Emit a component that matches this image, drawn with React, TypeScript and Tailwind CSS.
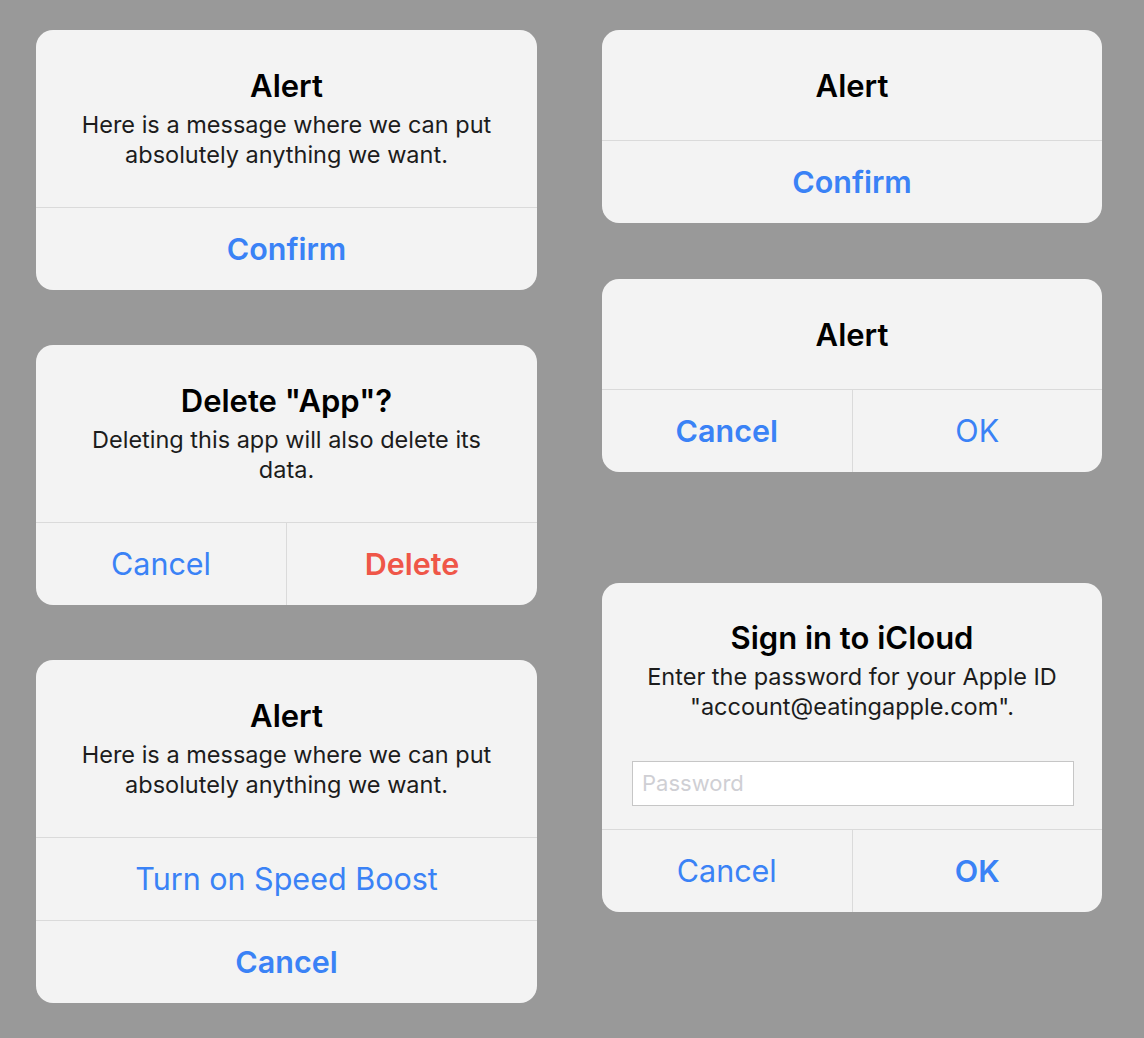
import React from "react";

const FONT = { fontFamily: 'Inter, "Liberation Sans", Arial, sans-serif' };

function Title({ children }: { children: React.ReactNode }) {
  return (
    <div className="text-[31px] leading-[38px] font-semibold text-black">
      {children}
    </div>
  );
}

function Message({ children }: { children: React.ReactNode }) {
  return (
    <div className="mt-[5px] text-[23.5px] leading-[30px] text-[#1c1c1c] px-4">
      {children}
    </div>
  );
}

function Btn({
  children,
  bold,
  red,
  left,
}: {
  children: React.ReactNode;
  bold?: boolean;
  red?: boolean;
  left?: boolean;
}) {
  return (
    <div
      className={
        "flex-1 h-[82px] flex items-center justify-center text-[30.5px] " +
        (bold ? "font-semibold " : "font-normal ") +
        (red ? "text-[#ef5648] " : "text-[#3a82f6] ") +
        (left ? "border-l border-[#dadada]" : "")
      }
    >
      {children}
    </div>
  );
}

function Card({ children, className = "" }: { children: React.ReactNode; className?: string }) {
  return (
    <div className={"bg-[#f3f3f3] rounded-[17px] overflow-hidden text-center " + className}>
      {children}
    </div>
  );
}

function Row({ children }: { children: React.ReactNode }) {
  return <div className="flex border-t border-[#dadada]">{children}</div>;
}

export default function App() {
  return (
    <div className="w-[1144px] h-[1038px] bg-[#999999] flex gap-[65px] pl-[36px] pt-[30px]" style={FONT}>
      <div className="w-[501px] flex flex-col">
        <Card>
          <div className="pt-[37px] pb-[37px]">
            <Title>Alert</Title>
            <Message>
              Here is a message where we can put
              <br />
              absolutely anything we want.
            </Message>
          </div>
          <Row>
            <Btn bold>Confirm</Btn>
          </Row>
        </Card>
        <Card className="mt-[55px]">
          <div className="pt-[37px] pb-[37px]">
            <Title>Delete "App"?</Title>
            <Message>
              Deleting this app will also delete its
              <br />
              data.
            </Message>
          </div>
          <Row>
            <Btn>Cancel</Btn>
            <Btn bold red left>
              Delete
            </Btn>
          </Row>
        </Card>
        <Card className="mt-[55px]">
          <div className="pt-[37px] pb-[37px]">
            <Title>Alert</Title>
            <Message>
              Here is a message where we can put
              <br />
              absolutely anything we want.
            </Message>
          </div>
          <Row>
            <Btn>Turn on Speed Boost</Btn>
          </Row>
          <Row>
            <Btn bold>Cancel</Btn>
          </Row>
        </Card>
      </div>
      <div className="w-[500px] flex flex-col">
        <Card>
          <div className="pt-[37px] pb-[35px]">
            <Title>Alert</Title>
          </div>
          <Row>
            <Btn bold>Confirm</Btn>
          </Row>
        </Card>
        <Card className="mt-[56px]">
          <div className="pt-[37px] pb-[35px]">
            <Title>Alert</Title>
          </div>
          <Row>
            <Btn bold>Cancel</Btn>
            <Btn left>OK</Btn>
          </Row>
        </Card>
        <Card className="mt-[111px]">
          <div className="pt-[36px] pb-[23px]">
            <Title>Sign in to iCloud</Title>
            <Message>
              Enter the password for your Apple ID
              <br />
              "account@eatingapple.com".
            </Message>
            <div className="mt-[39px] ml-[30px] mr-[28px] h-[45px] bg-white border border-[#c6c6c6] flex items-center px-[9px] text-left">
              <span className="text-[22px] text-[#cfcfd4]">Password</span>
            </div>
          </div>
          <Row>
            <Btn>Cancel</Btn>
            <Btn bold left>
              OK
            </Btn>
          </Row>
        </Card>
      </div>
    </div>
  );
}
